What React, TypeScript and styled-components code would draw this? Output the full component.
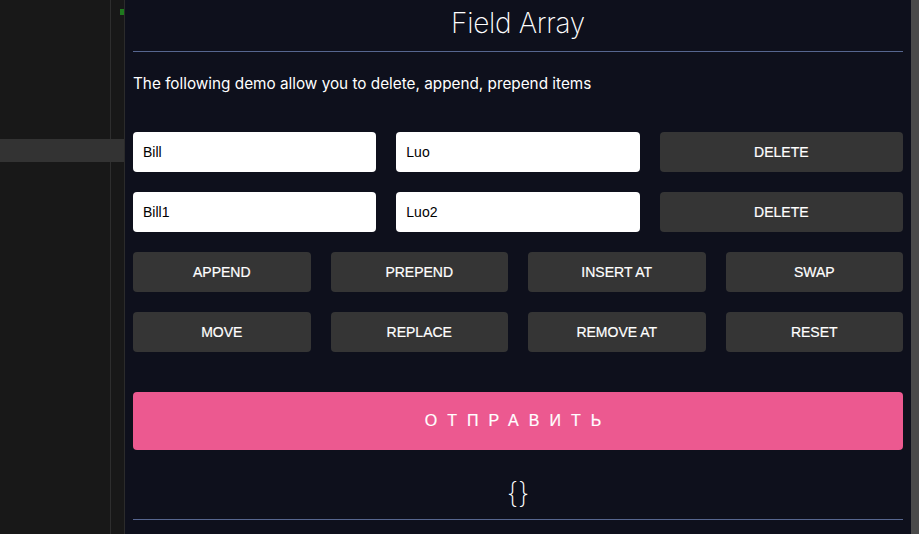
import styled, { createGlobalStyle } from 'styled-components';

const GlobalStyle = createGlobalStyle`
  html, body {
    margin: 0;
    padding: 0;
    height: 100%;
    overflow: hidden;
    background: #0e101c;
  }
  #root {
    height: 100%;
  }
`;

const Screen = styled.div`
  display: flex;
  height: 534px;
  font-family: 'Liberation Sans', Arial, sans-serif;
`;

const Sidebar = styled.div`
  width: 124px;
  flex-shrink: 0;
  display: flex;
  background: #181818;
  border-right: 1px solid #2b2b2b;
  position: relative;
`;

const SideColumn = styled.div`
  width: 110px;
  border-right: 1px solid #2e2e2e;
`;

const Gutter = styled.div`
  flex: 1;
  display: flex;
  justify-content: flex-end;
  padding-top: 9px;
`;

const Marker = styled.div`
  width: 4px;
  height: 6px;
  background: #1e7a1e;
`;

const ActiveRow = styled.div`
  position: absolute;
  left: 0;
  right: 0;
  top: 139px;
  height: 23px;
  background: #333333;
`;

const Main = styled.div`
  flex: 1;
  padding: 0 8px;
  background: #0e101c;
  color: #fff;
`;

const Title = styled.h1`
  margin: 0;
  padding-top: 4px;
  height: 47px;
  font-family: Inter, 'Open Sans', sans-serif;
  font-weight: 200;
  font-size: 28px;
  letter-spacing: -0.3px;
  line-height: 38px;
  text-align: center;
  border-bottom: 1px solid #56668f;
`;

const Intro = styled.p`
  margin: 0;
  padding-top: 22px;
  height: 58px;
  font-family: Inter, 'Liberation Sans', sans-serif;
  font-size: 15.3px;
  line-height: 20px;
`;

const Rows = styled.div`
  display: flex;
  flex-direction: column;
  gap: 20px;
`;

const FieldRow = styled.div`
  display: grid;
  grid-template-columns: repeat(3, 1fr);
  gap: 20px;
`;

const ActionRow = styled.div`
  display: grid;
  grid-template-columns: repeat(4, 1fr);
  gap: 20px;
`;

const Input = styled.input`
  box-sizing: border-box;
  height: 40px;
  width: 100%;
  border: none;
  border-radius: 4px;
  padding: 0 10px;
  font-family: 'Liberation Sans', Arial, sans-serif;
  font-size: 14px;
  color: #000;
  background: #fff;
  outline: none;
`;

const Button = styled.button`
  height: 40px;
  padding-bottom: 2px;
  border: none;
  border-radius: 4px;
  background: #353535;
  color: #fff;
  font-family: 'Liberation Sans', Arial, sans-serif;
  font-size: 14px;
  -webkit-text-stroke: 0.2px #fff;
  text-transform: uppercase;
  cursor: pointer;
`;

const Submit = styled.button`
  display: block;
  width: 100%;
  height: 58px;
  margin-top: 40px;
  border: none;
  border-radius: 4px;
  background: #ec5990;
  color: #fff;
  font-family: 'Liberation Sans', Arial, sans-serif;
  font-size: 16px;
  -webkit-text-stroke: 0.2px #fff;
  letter-spacing: 10px;
  text-transform: uppercase;
`;

const Output = styled.pre`
  margin: 0;
  height: 70px;
  box-sizing: border-box;
  padding-top: 27px;
  border-bottom: 1px solid #56668f;
  text-align: center;
  font-family: Inter, sans-serif;
  font-size: 28px;
  line-height: 32px;
  font-weight: 200;
`;

const Scrollbar = styled.div`
  width: 8px;
  flex-shrink: 0;
  background: #4a4a4a;
`;

const people = [
  { first: 'Bill', last: 'Luo' },
  { first: 'Bill1', last: 'Luo2' },
];

const actions = [
  ['append', 'prepend', 'insert at', 'swap'],
  ['move', 'replace', 'remove at', 'reset'],
];

export default function App() {
  return (
    <>
      <GlobalStyle />
      <Screen>
        <Sidebar>
          <SideColumn />
          <Gutter>
            <Marker />
          </Gutter>
          <ActiveRow />
        </Sidebar>
        <Main>
          <Title>Field Array</Title>
          <Intro>The following demo allow you to delete, append, prepend items</Intro>
          <Rows>
            {people.map((p, i) => (
              <FieldRow key={i}>
                <Input defaultValue={p.first} />
                <Input defaultValue={p.last} />
                <Button type="button">Delete</Button>
              </FieldRow>
            ))}
            {actions.map((row, i) => (
              <ActionRow key={i}>
                {row.map((a) => (
                  <Button key={a} type="button">
                    {a}
                  </Button>
                ))}
              </ActionRow>
            ))}
          </Rows>
          <Submit type="submit">Отправить</Submit>
          <Output>{'{}'}</Output>
        </Main>
        <Scrollbar />
      </Screen>
    </>
  );
}
